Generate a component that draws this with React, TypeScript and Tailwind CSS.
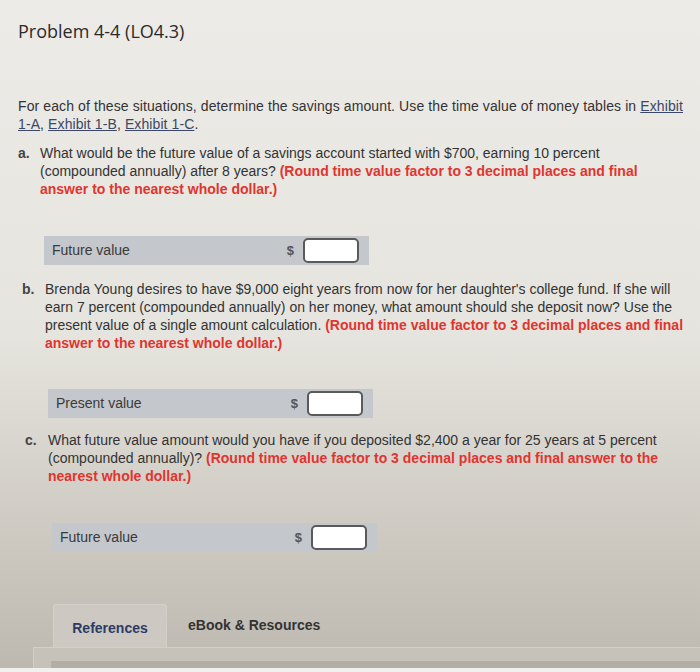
import React from "react";

const Red = ({ children }: { children: React.ReactNode }) => (
  <span className="font-bold text-[#e0352f]">{children}</span>
);

const AnswerRow = ({ label, cls }: { label: string; cls: string }) => (
  <div className={`flex items-center h-[29px] w-[325px] bg-[#c4c7cb] ${cls}`}>
    <span className="ml-[8px] text-[14px] text-[#3a3a3a]">{label}</span>
    <span className="ml-auto text-[13px] font-bold text-[#555]">$</span>
    <div className="ml-[9px] mr-[10px] h-[25px] w-[56px] rounded-[5px] border-2 border-[#5a5a5a] bg-white" />
  </div>
);

export default function App() {
  return (
    <div
      className="relative w-[700px] h-[672px] overflow-hidden bg-linear-to-b from-[#ecebe7] via-[#e6e4de] to-[#bdb8af] text-[#333]"
      style={{ fontFamily: '"Liberation Sans", Arial, sans-serif' }}
    >
      <div className="pt-[19px] pl-[18px] text-[18px] leading-[24px] text-[#2b2b2b]" style={{ fontFamily: '"Open Sans", sans-serif' }}>
        Problem 4-4 (LO4.3)
      </div>

      <p className="mt-[54px] pl-[18px] text-[14px] leading-[18px] tracking-[0.1px] text-[#333]">
        For each of these situations, determine the savings amount. Use the time value of money tables in{" "}
        <span className="underline text-[#3b4766]">Exhibit</span>
        <br />
        <span className="underline text-[#3b4766]">1-A</span>,{" "}
        <span className="underline text-[#3b4766]">Exhibit 1-B</span>,{" "}
        <span className="underline text-[#3b4766]">Exhibit 1-C</span>.
      </p>

      <div className="mt-[11px] flex pl-[18px] text-[14px] leading-[18px]">
        <span className="w-[22px] font-bold text-[#444]">a.</span>
        <p>
          What would be the future value of a savings account started with $700, earning 10 percent
          <br />
          (compounded annually) after 8 years? <Red>(Round time value factor to 3 decimal places and final</Red>
          <br />
          <Red>answer to the nearest whole dollar.)</Red>
        </p>
      </div>
      <AnswerRow label="Future value" cls="mt-[38px] ml-[44px]" />

      <div className="mt-[15px] flex pl-[22px] text-[14px] leading-[18px]">
        <span className="w-[23px] font-bold text-[#444]">b.</span>
        <p>
          Brenda Young desires to have $9,000 eight years from now for her daughter's college fund. If she will
          <br />
          earn 7 percent (compounded annually) on her money, what amount should she deposit now? Use the
          <br />
          present value of a single amount calculation. <Red>(Round time value factor to 3 decimal places and final</Red>
          <br />
          <Red>answer to the nearest whole dollar.)</Red>
        </p>
      </div>
      <AnswerRow label="Present value" cls="mt-[37px] ml-[48px]" />

      <div className="mt-[13px] flex pl-[25px] text-[14px] leading-[18px]">
        <span className="w-[23px] font-bold text-[#444]">c.</span>
        <p>
          What future value amount would you have if you deposited $2,400 a year for 25 years at 5 percent
          <br />
          (compounded annually)? <Red>(Round time value factor to 3 decimal places and final answer to the</Red>
          <br />
          <Red>nearest whole dollar.)</Red>
        </p>
      </div>
      <AnswerRow label="Future value" cls="mt-[38px] ml-[52px]" />

      <div className="mt-[52px] flex items-end pl-[53px]">
        <div className="flex h-[43px] w-[114px] items-center justify-center rounded-t-[3px] border border-b-0 border-[#d3d0c9] bg-[#cdc9c2] pt-[4px] text-[14px] font-bold text-[#2c3b66]">
          References
        </div>
        <div className="flex h-[43px] items-center pl-[21px] text-[14px] font-bold text-[#333]">
          eBook &amp; Resources
        </div>
      </div>
      <div className="ml-[33px] h-[30px] border-t border-l border-[#d2cfc8] bg-[#c6c2ba]">
        <div className="ml-[17px] mt-[13px] h-[20px] bg-[#b3aea5]" />
      </div>
      <div className="absolute bottom-0 left-0 h-[4px] w-full bg-[#f2f1ee]" />
    </div>
  );
}
